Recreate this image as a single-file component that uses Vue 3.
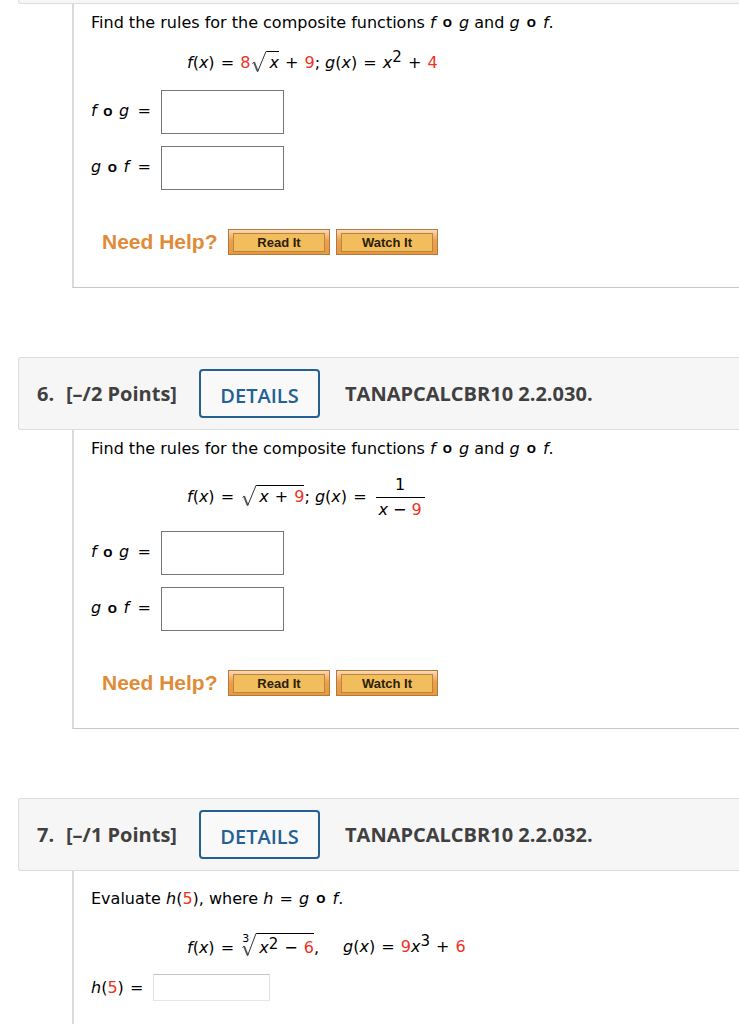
<script setup>
import { reactive } from 'vue'

const answers = reactive({ fg5: '', gf5: '', fg6: '', gf6: '', h7: '' })
</script>

<template>
  <main class="assignment">
    <section class="question">
      <header class="stub"></header>
      <div class="body">
        <p class="prompt">Find the rules for the composite functions <i>f</i> <b class="ring">o</b> <i>g</i> and <i>g</i> <b class="ring">o</b> <i>f</i>.</p>
        <div class="equation">
          <span><i>f</i>(<i>x</i>) <span class="op">=</span> <em>8</em><span class="radical"><svg class="root" viewBox="0 0 15 22"><path class="thin" d="M0.5 12.5 L2 11" /><path class="thick" d="M2 11 L5.5 20" /><path class="thin" d="M5.5 21 L14 0.5 H15" /></svg><span class="radicand"><i>x</i></span></span> <span class="op">+</span> <em>9</em>; <i>g</i>(<i>x</i>) <span class="op">=</span> <i>x</i><sup>2</sup> <span class="op">+</span> <em>4</em></span>
        </div>
        <div class="answers">
          <div class="answer">
            <label for="fg5"><i>f</i><b class="ring">o</b><i>g</i><span class="eq">=</span></label>
            <input id="fg5" v-model="answers.fg5" type="text" />
          </div>
          <div class="answer">
            <label for="gf5"><i>g</i><b class="ring">o</b><i>f</i><span class="eq">=</span></label>
            <input id="gf5" v-model="answers.gf5" type="text" />
          </div>
        </div>
        <div class="help">
          <span class="help-title">Need Help?</span>
          <button type="button" class="help-button"><span>Read It</span></button>
          <button type="button" class="help-button"><span>Watch It</span></button>
        </div>
      </div>
    </section>

    <section class="question">
      <header class="bar">
        <span class="number">6.</span>
        <span class="points">[–/2 Points]</span>
        <button type="button" class="details">DETAILS</button>
        <span class="code">TANAPCALCBR10 2.2.030.</span>
      </header>
      <div class="body">
        <p class="prompt">Find the rules for the composite functions <i>f</i> <b class="ring">o</b> <i>g</i> and <i>g</i> <b class="ring">o</b> <i>f</i>.</p>
        <div class="equation tall">
          <span><i>f</i>(<i>x</i>) <span class="op">=</span> <span class="radical"><svg class="root" viewBox="0 0 15 22"><path class="thin" d="M0.5 12.5 L2 11" /><path class="thick" d="M2 11 L5.5 20" /><path class="thin" d="M5.5 21 L14 0.5 H15" /></svg><span class="radicand"><i>x</i> <span class="op">+</span> <em>9</em></span></span>; <i>g</i>(<i>x</i>) <span class="op">=</span></span>
          <span class="fraction"><span class="top">1</span><span class="bottom"><i>x</i> − <em>9</em></span></span>
        </div>
        <div class="answers">
          <div class="answer">
            <label for="fg6"><i>f</i><b class="ring">o</b><i>g</i><span class="eq">=</span></label>
            <input id="fg6" v-model="answers.fg6" type="text" />
          </div>
          <div class="answer">
            <label for="gf6"><i>g</i><b class="ring">o</b><i>f</i><span class="eq">=</span></label>
            <input id="gf6" v-model="answers.gf6" type="text" />
          </div>
        </div>
        <div class="help">
          <span class="help-title">Need Help?</span>
          <button type="button" class="help-button"><span>Read It</span></button>
          <button type="button" class="help-button"><span>Watch It</span></button>
        </div>
      </div>
    </section>

    <section class="question">
      <header class="bar">
        <span class="number">7.</span>
        <span class="points">[–/1 Points]</span>
        <button type="button" class="details">DETAILS</button>
        <span class="code">TANAPCALCBR10 2.2.032.</span>
      </header>
      <div class="body last">
        <p class="prompt">Evaluate <i>h</i>(<em>5</em>), where <i>h</i> <span class="op">=</span> <i>g</i> <b class="ring">o</b> <i>f</i>.</p>
        <div class="equation cubic">
          <span><i>f</i>(<i>x</i>) <span class="op">=</span> <span class="radical"><span class="index">3</span><svg class="root" viewBox="0 0 15 24"><path class="thin" d="M0.5 14.5 L2 13" /><path class="thick" d="M2 13 L5.5 22" /><path class="thin" d="M5.5 23 L14 0.5 H15" /></svg><span class="radicand"><i>x</i><sup>2</sup> <span class="op">−</span> <em>6</em></span></span>,</span>
          <span class="second"><i>g</i>(<i>x</i>) <span class="op">=</span> <em>9</em><i>x</i><sup>3</sup> <span class="op">+</span> <em>6</em></span>
        </div>
        <div class="answer inline">
          <label for="h7"><span><i>h</i>(<em>5</em>) <span class="op">=</span></span></label>
          <input id="h7" v-model="answers.h7" type="text" />
        </div>
      </div>
    </section>
  </main>
</template>

<style>
body {
  margin: 0;
  background: #fff;
}
</style>

<style scoped>
.assignment {
  padding-left: 18px;
  min-height: 100vh;
  display: flex;
  flex-direction: column;
  gap: 69px;
  box-sizing: border-box;
  overflow: hidden;
  font: 16px/24px Verdana, "DejaVu Sans", sans-serif;
  color: #000;
}
.question {
  display: flex;
  flex-direction: column;
}
.question:last-child {
  flex: 1;
}
.stub,
.bar {
  background: #f6f6f6;
  border: 1px solid #dcdcdc;
  border-right: 0;
  border-radius: 3px 0 0 3px;
}
.stub {
  height: 3px;
  border-top: 0;
  border-radius: 0 0 0 3px;
}
.bar {
  display: flex;
  align-items: center;
  height: 71px;
  padding-left: 18px;
  white-space: nowrap;
  font: bold 20px/28px "Open Sans", sans-serif;
  color: #404040;
}
.number {
  width: 29px;
}
.points {
  width: 133px;
}
.details {
  box-sizing: border-box;
  width: 121px;
  height: 49px;
  margin-right: 25px;
  padding: 4px 0 0;
  border: 2px solid #246094;
  border-radius: 4px;
  background: #f9f9f9;
  color: #246094;
  font: 600 20px/28px "Open Sans", sans-serif;
}
.body {
  margin-left: 54px;
  padding: 7px 0 32px 17px;
  border-left: 2px solid #dadada;
  border-bottom: 1px solid #c8c8c8;
}
.body.last {
  flex: 1;
  padding-top: 16px;
  border-bottom: 0;
}
.prompt {
  margin: 0;
  white-space: nowrap;
}
em {
  font-style: normal;
  color: #ee3124;
}
.op {
  margin: 0 1px;
}
.ring {
  margin: 0 2px;
  font: bold 16px/16px Lato, sans-serif;
  vertical-align: 1px;
}
.equation {
  box-sizing: border-box;
  display: flex;
  align-items: center;
  height: 55px;
  padding: 1px 0 0 96px;
  white-space: nowrap;
}
.equation.tall {
  height: 70px;
  padding-top: 2px;
  gap: 8px;
}
.equation.cubic {
  height: 63px;
  padding-top: 8px;
  gap: 24px;
}
.equation sup {
  font-size: 15px;
  line-height: 0;
  vertical-align: 6px;
}
.radical {
  display: inline-flex;
  margin-left: 2px;
}
.root {
  width: 15px;
  height: 22px;
  align-self: flex-start;
  fill: none;
  stroke: #333;
}
.cubic .root {
  height: 24px;
}
.thin {
  stroke-width: 1;
}
.thick {
  stroke: #555;
  stroke-width: 2;
}
.radicand {
  align-self: baseline;
  padding: 1px 0 0 2px;
  line-height: 20px;
  border-top: 1px solid #000;
}
.cubic .radicand {
  padding-top: 4px;
}
.radicand sup {
  vertical-align: 4px;
}
.index {
  align-self: flex-start;
  width: 8px;
  margin-right: -8px;
  font-size: 11px;
  line-height: 12px;
}
.fraction {
  display: inline-flex;
  flex-direction: column;
  align-items: stretch;
  text-align: center;
}
.top {
  border-bottom: 1px solid #000;
}
.bottom {
  padding: 0 3px;
}
.answers {
  display: flex;
  flex-direction: column;
  gap: 12px;
}
.answer {
  display: flex;
  align-items: center;
}
.answer label {
  display: flex;
  align-items: baseline;
  justify-content: space-between;
  width: 60px;
  margin-right: 10px;
  padding-bottom: 2px;
}
.answer .ring {
  margin: 0;
}
.eq {
  padding-left: 2px;
}
.answer input {
  box-sizing: border-box;
  width: 123px;
  height: 44px;
  padding: 4px;
  border: 1px solid #767676;
  border-radius: 0;
  background: #fff;
  font: inherit;
}
.answer.inline label {
  width: auto;
  margin-right: 9px;
  padding-bottom: 0;
}
.answer.inline input {
  width: 117px;
  height: 27px;
  border-color: #c4c4c4 #e0e0e0 #e6e6e6;
}
.help {
  display: flex;
  align-items: center;
  gap: 6px;
  margin-top: 39px;
  padding-left: 11px;
}
.help-title {
  width: 120px;
  font: bold 21px/26px Arial, "Liberation Sans", sans-serif;
  color: #e08b38;
}
.help-button {
  box-sizing: border-box;
  width: 102px;
  height: 26px;
  padding: 3px 4px;
  border: 1px solid #b07b3e;
  background: linear-gradient(#fbd9b8, #ee9f4c 45%, #ea9840);
  color: #2a2008;
}
.help-button span {
  display: block;
  padding-top: 1px;
  border: 1px solid #b98640;
  background: #f2bd5c;
  font: bold 13px/16px Arial, "Liberation Sans", sans-serif;
}
</style>
